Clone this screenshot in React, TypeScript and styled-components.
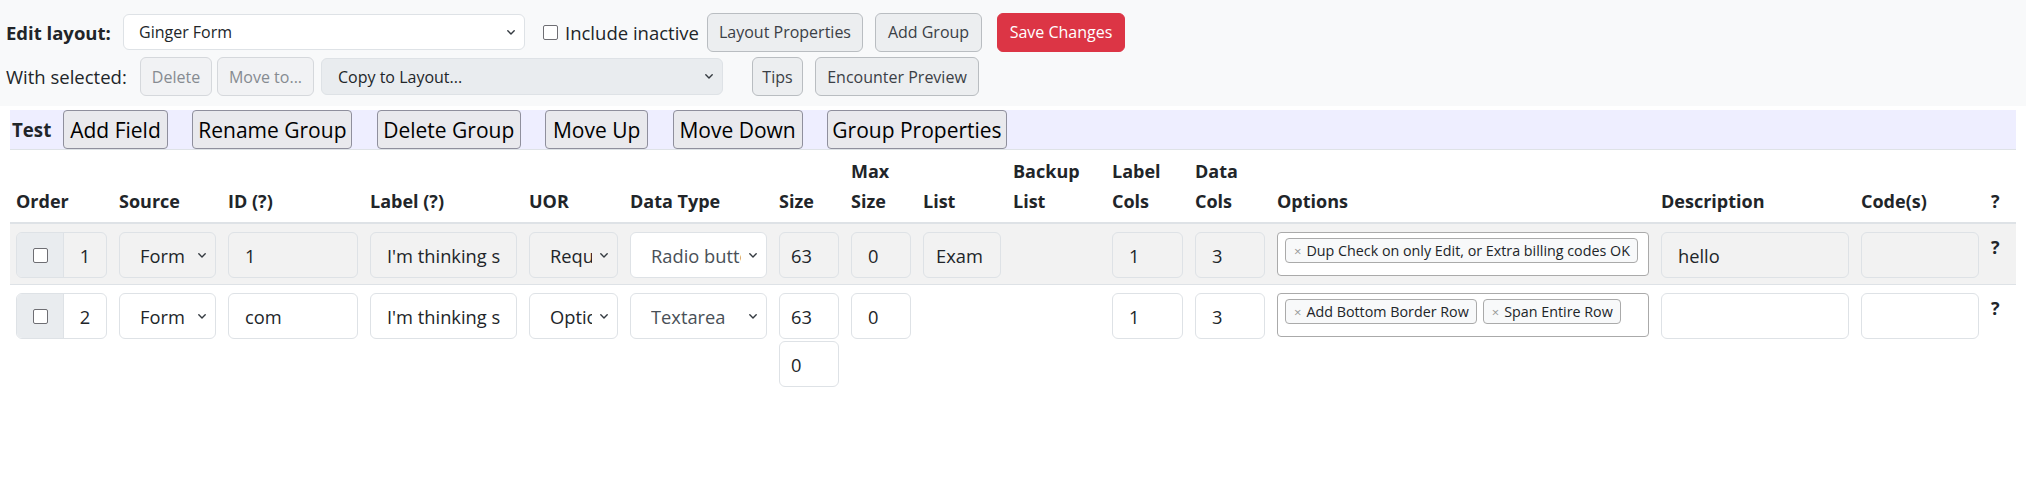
import styled, { createGlobalStyle } from 'styled-components'

const GlobalStyle = createGlobalStyle`
  * { box-sizing: border-box; }
  body {
    margin: 0;
    background: #fff;
    color: #212529;
    font-family: "Open Sans", "Noto Sans", sans-serif;
  }
`

const TopPanel = styled.div`
  background: #f8f9fa;
  padding: 12px 6px 9px;
  display: flex;
  flex-direction: column;
  gap: 4px;
`

const ToolRow = styled.div<{ $h: number }>`
  display: flex;
  align-items: center;
  height: ${p => p.$h}px;
`

const FieldLabel = styled.span<{ $w: number; $bold?: boolean }>`
  flex: none;
  width: ${p => p.$w}px;
  font-size: 18.5px;
  font-weight: ${p => (p.$bold ? 700 : 400)};
  white-space: nowrap;
`

const SelectShell = styled.div<{ $w: number; $h: number; $pl: number; $fs: number; $bg: string; $color?: string; $mr?: number }>`
  flex: none;
  display: flex;
  align-items: center;
  width: ${p => p.$w}px;
  height: ${p => p.$h}px;
  margin-right: ${p => p.$mr ?? 0}px;
  padding: 0 9px 0 ${p => p.$pl}px;
  background: ${p => p.$bg};
  border: 1px solid #dee2e6;
  border-radius: 6px;
  font-size: ${p => p.$fs}px;
  color: ${p => p.$color ?? '#212529'};
`

const SelectText = styled.span`
  flex: 1;
  min-width: 0;
  overflow: hidden;
  white-space: nowrap;
  margin-right: 8px;
`

const CheckBox = styled.input.attrs({ type: 'checkbox' })<{ $mr?: number }>`
  appearance: none;
  flex: none;
  margin: 0 ${p => p.$mr ?? 0}px 0 0;
  width: 15px;
  height: 15px;
  background: #fff;
  border: 1px solid #6e6e73;
  border-radius: 2px;
`

const LightButton = styled.button<{ $w: number; $mr?: number; $off?: boolean }>`
  flex: none;
  width: ${p => p.$w}px;
  height: 39px;
  margin-right: ${p => p.$mr ?? 0}px;
  padding: 0;
  font-family: inherit;
  font-size: 16px;
  border-radius: 6px;
  background: ${p => (p.$off ? '#f1f2f4' : '#eceef0')};
  border: 1px solid ${p => (p.$off ? '#d5d8dc' : '#b9bdc1')};
  color: ${p => (p.$off ? '#868b91' : '#3b4046')};
`

const SaveButton = styled(LightButton)`
  background: #dc3545;
  border-color: #dc3545;
  color: #fff;
`

const GroupBar = styled.div`
  margin: 4px 10px 0;
  height: 40px;
  padding-left: 2px;
  display: flex;
  align-items: flex-start;
  background: #eeeeff;
  border-bottom: 1px solid #dee2e6;
`

const GroupTitle = styled.span`
  flex: none;
  width: 51px;
  line-height: 39px;
  font-size: 18.7px;
  font-weight: 700;
`

const GroupButton = styled.button<{ $w: number }>`
  flex: none;
  width: ${p => p.$w}px;
  height: 39px;
  padding: 0;
  font-family: inherit;
  font-size: 21px;
  color: #000;
  background: #e9e9ed;
  border: 1px solid #8f8f9d;
  border-radius: 4px;
  & + & {
    margin-left: 24.4px;
  }
`

const Grid = styled.table`
  margin: 0 10px;
  width: 2006px;
  table-layout: fixed;
  border-collapse: collapse;
`

const Col = styled.col<{ $w: number }>`
  width: ${p => p.$w}px;
`

const HeadCell = styled.th`
  height: 73px;
  padding: 0 6px 6px;
  vertical-align: bottom;
  text-align: left;
  font-size: 18px;
  font-weight: 700;
  line-height: 30px;
  border-bottom: 2px solid #dee2e6;
`

const BodyRow = styled.tr<{ $striped?: boolean }>`
  background: ${p => (p.$striped ? '#f2f2f2' : 'transparent')};
  & > td {
    border-bottom: ${p => (p.$striped ? '1px solid #dee2e6' : 'none')};
  }
`

const Cell = styled.td`
  padding: 8px 6px 6px;
  vertical-align: top;
`

const TextInput = styled.input<{ $w: number; $px?: number; $bg?: string }>`
  display: block;
  width: ${p => p.$w}px;
  height: 46px;
  padding: 0 ${p => p.$px ?? 16}px;
  font-family: inherit;
  font-size: 18.3px;
  color: #212529;
  background: ${p => p.$bg ?? 'transparent'};
  border: 1px solid #dee2e6;
  border-radius: 6px;
`

const SizeStack = styled.div`
  display: flex;
  flex-direction: column;
  gap: 2px;
`

const OrderGroup = styled.div`
  display: flex;
  width: 91px;
  height: 46px;
  border: 1px solid #dee2e6;
  border-radius: 6px;
  overflow: hidden;
`

const CheckPart = styled.div`
  flex: none;
  width: 47px;
  display: flex;
  align-items: center;
  justify-content: center;
  background: #e9ecef;
  border-right: 1px solid #dee2e6;
`

const NumberPart = styled.div`
  flex: 1;
  display: flex;
  align-items: center;
  justify-content: center;
  font-size: 18.3px;
`

const OptionsBox = styled.div`
  width: 372px;
  height: 44px;
  padding: 5px 7px;
  display: flex;
  flex-wrap: wrap;
  align-content: flex-start;
  gap: 6px;
  background: #fff;
  border: 1px solid #aaa;
  border-radius: 4px;
`

const Chip = styled.span`
  display: inline-flex;
  align-items: center;
  height: 25px;
  padding: 0 7px 0 8px;
  font-size: 14.3px;
  white-space: nowrap;
  background: #f8f9fa;
  border: 1px solid #aaa;
  border-radius: 4px;
`

const ChipX = styled.span`
  color: #999;
  font-size: 13px;
  margin-right: 5px;
`

const Hint = styled.span`
  font-size: 18px;
  font-weight: 700;
  line-height: 30px;
`

function Chevron() {
  return (
    <svg width="8" height="5" viewBox="0 0 8 5" style={{ flex: 'none' }}>
      <polyline points="0.8,0.8 4,4 7.2,0.8" fill="none" stroke="#343a40" strokeWidth="1.4" strokeLinecap="round" strokeLinejoin="round" />
    </svg>
  )
}

type DropProps = { w: number; h?: number; pl?: number; fs?: number; bg?: string; color?: string; mr?: number; text: string }

function Dropdown({ w, h = 46, pl = 20, fs = 18.3, bg = 'transparent', color, mr, text }: DropProps) {
  return (
    <SelectShell $w={w} $h={h} $pl={pl} $fs={fs} $bg={bg} $color={color} $mr={mr}>
      <SelectText>{text}</SelectText>
      <Chevron />
    </SelectShell>
  )
}

const columns: [string, number][] = [
  ['Order', 103],
  ['Source', 109],
  ['ID (?)', 142],
  ['Label (?)', 159],
  ['UOR', 101],
  ['Data Type', 149],
  ['Size', 72],
  ['Max Size', 72],
  ['List', 90],
  ['Backup List', 99],
  ['Label Cols', 83],
  ['Data Cols', 82],
  ['Options', 384],
  ['Description', 200],
  ['Code(s)', 130],
  ['?', 31],
]

type Field = {
  order: number
  id: string
  uor: string
  dataType: string
  list?: string
  description: string
  options: string[]
  extraSize?: boolean
}

const fields: Field[] = [
  { order: 1, id: '1', uor: 'Required', dataType: 'Radio buttons', list: 'Exam', description: 'hello', options: ['Dup Check on only Edit, or Extra billing codes OK'] },
  { order: 2, id: 'com', uor: 'Optional', dataType: 'Textarea', description: '', options: ['Add Bottom Border Row', 'Span Entire Row'], extraSize: true },
]

function FieldRow({ f }: { f: Field }) {
  const striped = f.order === 1
  return (
    <BodyRow $striped={striped}>
      <Cell>
        <OrderGroup>
          <CheckPart><CheckBox /></CheckPart>
          <NumberPart>{f.order}</NumberPart>
        </OrderGroup>
      </Cell>
      <Cell><Dropdown w={97} text="Form" /></Cell>
      <Cell><TextInput $w={130} defaultValue={f.id} /></Cell>
      <Cell><TextInput $w={147} defaultValue="I'm thinking something" /></Cell>
      <Cell><Dropdown w={89} text={f.uor} /></Cell>
      <Cell><Dropdown w={137} text={f.dataType} bg="#fff" color="#495057" /></Cell>
      <Cell>
        <SizeStack>
          <TextInput $w={60} $px={11} defaultValue="63" />
          {f.extraSize && <TextInput $w={60} $px={11} defaultValue="0" />}
        </SizeStack>
      </Cell>
      <Cell><TextInput $w={60} defaultValue="0" /></Cell>
      <Cell>{f.list && <TextInput $w={78} $px={12} defaultValue={f.list} />}</Cell>
      <Cell />
      <Cell><TextInput $w={71} defaultValue="1" /></Cell>
      <Cell><TextInput $w={70} defaultValue="3" /></Cell>
      <Cell>
        <OptionsBox>
          {f.options.map(o => (
            <Chip key={o}><ChipX>×</ChipX>{o}</Chip>
          ))}
        </OptionsBox>
      </Cell>
      <Cell><TextInput $w={188} defaultValue={f.description} /></Cell>
      <Cell><TextInput $w={118} defaultValue="" /></Cell>
      <Cell><Hint>?</Hint></Cell>
    </BodyRow>
  )
}

export default function App() {
  return (
    <>
      <GlobalStyle />
      <TopPanel>
        <ToolRow $h={40}>
          <FieldLabel $w={117} $bold>Edit layout:</FieldLabel>
          <Dropdown w={402} h={36} pl={15} fs={16} bg="#fff" mr={18} text="Ginger Form" />
          <CheckBox $mr={7} />
          <FieldLabel $w={142}>Include inactive</FieldLabel>
          <LightButton $w={156} $mr={12}>Layout Properties</LightButton>
          <LightButton $w={107} $mr={15}>Add Group</LightButton>
          <SaveButton $w={128}>Save Changes</SaveButton>
        </ToolRow>
        <ToolRow $h={41}>
          <FieldLabel $w={134}>With selected:</FieldLabel>
          <LightButton $w={72} $mr={5} $off>Delete</LightButton>
          <LightButton $w={97} $mr={7} $off>Move to...</LightButton>
          <Dropdown w={402} h={37} pl={16} fs={16} bg="#e9ecef" mr={29} text="Copy to Layout..." />
          <LightButton $w={51} $mr={12}>Tips</LightButton>
          <LightButton $w={164}>Encounter Preview</LightButton>
        </ToolRow>
      </TopPanel>

      <GroupBar>
        <GroupTitle>Test</GroupTitle>
        <GroupButton $w={105}>Add Field</GroupButton>
        <GroupButton $w={160}>Rename Group</GroupButton>
        <GroupButton $w={144}>Delete Group</GroupButton>
        <GroupButton $w={103}>Move Up</GroupButton>
        <GroupButton $w={130}>Move Down</GroupButton>
        <GroupButton $w={180}>Group Properties</GroupButton>
      </GroupBar>

      <Grid>
        <colgroup>
          {columns.map(([name, w]) => <Col key={name} $w={w} />)}
        </colgroup>
        <thead>
          <tr>
            {columns.map(([name]) => <HeadCell key={name}>{name}</HeadCell>)}
          </tr>
        </thead>
        <tbody>
          {fields.map(f => <FieldRow key={f.order} f={f} />)}
        </tbody>
      </Grid>
    </>
  )
}
